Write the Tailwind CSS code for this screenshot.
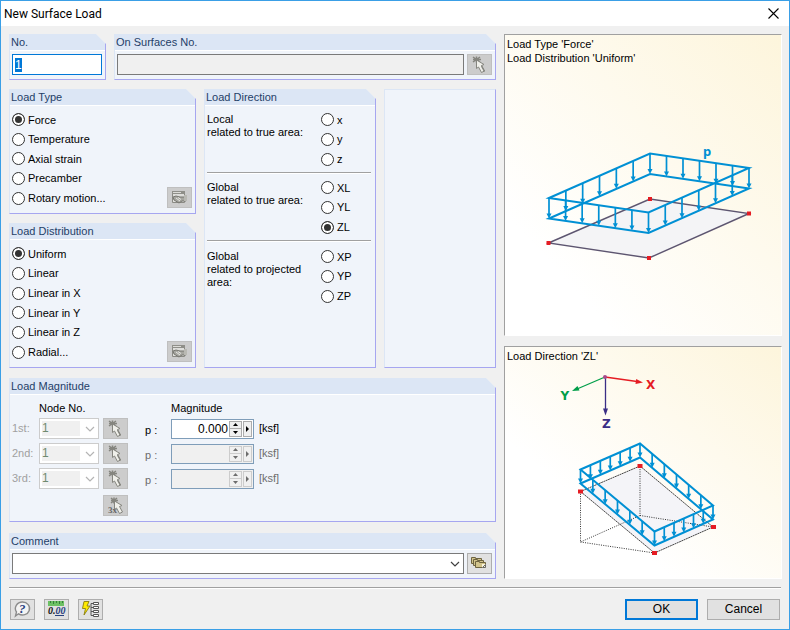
<!DOCTYPE html>
<html lang="en">
<head>
  <meta charset="UTF-8" />
  <meta name="viewport" content="width=device-width, initial-scale=1.0" />
  <title>New Surface Load</title>

  <!-- Tailwind CSS -->
  <script src="https://cdn.jsdelivr.net/npm/@tailwindcss/browser@4"></script>
</head>
<body class="bg-[#f0f0f0] text-black font-['Liberation_Sans',Arial,sans-serif] text-[11px]">

<!-- Shared icons -->
<svg class="hidden">
  <symbol id="icon-pick" viewBox="0 0 23 19">
    <path d="M5 2l7 5M12 2l-7 5M8.500 1.500v6M5 4.500h8" stroke="#85857f" stroke-width="1.500" fill="none" />
    <path d="M8.500 5v8.500l2-1.500 3 5.500 3-1.500-3-5.500 2.500-1z" fill="#efefea" stroke="#85857f" stroke-width="1" />
    <path d="M14 10.500l3 5.500-1 1-3-5.500z" fill="#85857f" />
  </symbol>
  <symbol id="icon-edit" viewBox="0 0 23 19">
    <path d="M4.500 3.500h12v11h-12z" fill="#dededb" stroke="#8a8a84" />
    <path d="M4 3h13v3H4z" fill="#8f8f89" />
    <path d="M5 4.500h8" stroke="#dcdcd8" />
    <path d="M5 9l3-1 4 1h6v4h-4l-3 2-5-3z" fill="#a6a6a0" stroke="#777771" />
    <path d="M8 10l4 3M10 9.500l3 2" stroke="#e6e6e2" />
    <path d="M16 7h3v6h-3z" fill="#b9b9b3" />
  </symbol>
  <symbol id="chevron" viewBox="0 0 10 6">
    <path d="M1 1l4 4 4-4" fill="none" stroke="currentColor" stroke-width="1.200" />
  </symbol>
</svg>

<div class="min-h-screen flex flex-col border border-[#3a9fe6]">

  <!-- Title bar -->
  <header class="h-[25px] shrink-0 bg-white flex justify-between items-center pl-[3px] pr-[10px]">
    <h1 class="text-[12px] font-[Roboto,sans-serif]">New Surface Load</h1>
    <button aria-label="Close">
      <svg class="w-[11px] h-[11px]" viewBox="0 0 11 11"><path d="M.5.5l10 10M10.500.5l-10 10" stroke="#000" stroke-width="1.100" /></svg>
    </button>
  </header>

  <main class="grow grid grid-cols-[487fr_278fr] gap-2 pt-2 pl-2 pr-[7px]">

    <!-- Form -->
    <div class="flex flex-col gap-[9px]">

      <div class="grid grid-cols-[97fr_382fr] gap-2">
        <section class="bg-[#f0f4fa] border-l border-l-[#dce6f5] border-r border-b border-r-[#a6a6f0] border-b-[#a6a6f0] [clip-path:polygon(0_0,calc(100%-10px)_0,100%_10px,100%_100%,0_100%)]">
          <h2 class="h-[17px] leading-4 bg-[#dce6f5] border-b border-white pl-px text-[#1f4068]"><label for="no">No.</label></h2>
          <div class="pt-[3px] pb-[4px] pl-[2px] pr-[3px]">
            <input id="no" type="text" value="1" class="block w-full h-[21px] bg-white border border-[#0078d7] px-[2px] text-[12px] outline-none selection:bg-[#0078d7] selection:text-white" />
          </div>
        </section>
        <section class="bg-[#f0f4fa] border-l border-l-[#dce6f5] border-r border-b border-r-[#a6a6f0] border-b-[#a6a6f0] [clip-path:polygon(0_0,calc(100%-10px)_0,100%_10px,100%_100%,0_100%)]">
          <h2 class="h-[17px] leading-4 bg-[#dce6f5] border-b border-white pl-px text-[#1f4068]"><label for="surfaces">On Surfaces No.</label></h2>
          <div class="flex gap-[3px] pt-[3px] pb-[4px] pl-[2px] pr-[3px]">
            <input id="surfaces" type="text" disabled class="grow h-[21px] bg-[#f0f0f0] border border-[#7a7a7a] px-[2px]" />
            <button disabled aria-label="Pick surfaces" class="w-[25px] h-[21px] bg-[#cccccc] border border-[#bfbfbf]"><svg class="w-full h-full"><use href="#icon-pick" /></svg></button>
          </div>
        </section>
      </div>

      <div class="grid grid-cols-[187fr_172fr_112fr] gap-2">
        <div class="flex flex-col gap-[9px]">

          <!-- Load Type -->
          <section class="bg-[#f0f4fa] border-l border-l-[#dce6f5] border-r border-b border-r-[#a6a6f0] border-b-[#a6a6f0] [clip-path:polygon(0_0,calc(100%-10px)_0,100%_10px,100%_100%,0_100%)]">
            <h2 class="h-[17px] leading-4 bg-[#dce6f5] border-b border-white pl-px text-[#1f4068]">Load Type</h2>
            <div class="flex justify-between items-end pt-1 pb-[5px] pl-[2px] pr-[3px]">
              <div class="grid grid-rows-5 h-[98px]">
                <label class="flex items-center gap-[3px]"><input type="radio" name="type" checked class="appearance-none w-[13px] h-[13px] rounded-full border border-[#333] bg-white checked:bg-[#333] checked:shadow-[inset_0_0_0_2px_white]" />Force</label>
                <label class="flex items-center gap-[3px]"><input type="radio" name="type" class="appearance-none w-[13px] h-[13px] rounded-full border border-[#333] bg-white checked:bg-[#333] checked:shadow-[inset_0_0_0_2px_white]" />Temperature</label>
                <label class="flex items-center gap-[3px]"><input type="radio" name="type" class="appearance-none w-[13px] h-[13px] rounded-full border border-[#333] bg-white checked:bg-[#333] checked:shadow-[inset_0_0_0_2px_white]" />Axial strain</label>
                <label class="flex items-center gap-[3px]"><input type="radio" name="type" class="appearance-none w-[13px] h-[13px] rounded-full border border-[#333] bg-white checked:bg-[#333] checked:shadow-[inset_0_0_0_2px_white]" />Precamber</label>
                <label class="flex items-center gap-[3px]"><input type="radio" name="type" class="appearance-none w-[13px] h-[13px] rounded-full border border-[#333] bg-white checked:bg-[#333] checked:shadow-[inset_0_0_0_2px_white]" />Rotary motion...</label>
              </div>
              <button disabled aria-label="Edit load type" class="w-[25px] h-[21px] bg-[#cccccc] border border-[#bfbfbf]"><svg class="w-full h-full"><use href="#icon-edit" /></svg></button>
            </div>
          </section>

          <!-- Load Distribution -->
          <section class="bg-[#f0f4fa] border-l border-l-[#dce6f5] border-r border-b border-r-[#a6a6f0] border-b-[#a6a6f0] [clip-path:polygon(0_0,calc(100%-10px)_0,100%_10px,100%_100%,0_100%)]">
            <h2 class="h-[17px] leading-4 bg-[#dce6f5] border-b border-white pl-px text-[#1f4068]">Load Distribution</h2>
            <div class="flex justify-between items-end pt-1 pb-[5px] pl-[2px] pr-[3px]">
              <div class="grid grid-rows-6 h-[118px]">
                <label class="flex items-center gap-[3px]"><input type="radio" name="dist" checked class="appearance-none w-[13px] h-[13px] rounded-full border border-[#333] bg-white checked:bg-[#333] checked:shadow-[inset_0_0_0_2px_white]" />Uniform</label>
                <label class="flex items-center gap-[3px]"><input type="radio" name="dist" class="appearance-none w-[13px] h-[13px] rounded-full border border-[#333] bg-white checked:bg-[#333] checked:shadow-[inset_0_0_0_2px_white]" />Linear</label>
                <label class="flex items-center gap-[3px]"><input type="radio" name="dist" class="appearance-none w-[13px] h-[13px] rounded-full border border-[#333] bg-white checked:bg-[#333] checked:shadow-[inset_0_0_0_2px_white]" />Linear in X</label>
                <label class="flex items-center gap-[3px]"><input type="radio" name="dist" class="appearance-none w-[13px] h-[13px] rounded-full border border-[#333] bg-white checked:bg-[#333] checked:shadow-[inset_0_0_0_2px_white]" />Linear in Y</label>
                <label class="flex items-center gap-[3px]"><input type="radio" name="dist" class="appearance-none w-[13px] h-[13px] rounded-full border border-[#333] bg-white checked:bg-[#333] checked:shadow-[inset_0_0_0_2px_white]" />Linear in Z</label>
                <label class="flex items-center gap-[3px]"><input type="radio" name="dist" class="appearance-none w-[13px] h-[13px] rounded-full border border-[#333] bg-white checked:bg-[#333] checked:shadow-[inset_0_0_0_2px_white]" />Radial...</label>
              </div>
              <button disabled aria-label="Edit load distribution" class="w-[25px] h-[21px] bg-[#cccccc] border border-[#bfbfbf]"><svg class="w-full h-full"><use href="#icon-edit" /></svg></button>
            </div>
          </section>
        </div>

        <!-- Load Direction -->
        <section class="bg-[#f0f4fa] border-l border-l-[#dce6f5] border-r border-b border-r-[#a6a6f0] border-b-[#a6a6f0] [clip-path:polygon(0_0,calc(100%-10px)_0,100%_10px,100%_100%,0_100%)]">
          <h2 class="h-[17px] leading-4 bg-[#dce6f5] border-b border-white pl-px text-[#1f4068]">Load Direction</h2>
          <div class="pl-[2px] pr-1">
            <div class="grid grid-cols-[114fr_50fr] pt-1 pb-[3px]">
              <p class="pt-[3px] leading-[13px]">Local<br />related to true area:</p>
              <div class="grid grid-rows-3 h-[59px]">
                <label class="flex items-center gap-[3px]"><input type="radio" name="dir" class="appearance-none w-[13px] h-[13px] rounded-full border border-[#333] bg-white checked:bg-[#333] checked:shadow-[inset_0_0_0_2px_white]" />x</label>
                <label class="flex items-center gap-[3px]"><input type="radio" name="dir" class="appearance-none w-[13px] h-[13px] rounded-full border border-[#333] bg-white checked:bg-[#333] checked:shadow-[inset_0_0_0_2px_white]" />y</label>
                <label class="flex items-center gap-[3px]"><input type="radio" name="dir" class="appearance-none w-[13px] h-[13px] rounded-full border border-[#333] bg-white checked:bg-[#333] checked:shadow-[inset_0_0_0_2px_white]" />z</label>
              </div>
            </div>
            <hr class="h-[2px] bg-white border-t border-[#a0a0a0]" />
            <div class="grid grid-cols-[114fr_50fr] pt-1 pb-[3px]">
              <p class="pt-[3px] leading-[13px]">Global<br />related to true area:</p>
              <div class="grid grid-rows-3 h-[59px]">
                <label class="flex items-center gap-[3px]"><input type="radio" name="dir" class="appearance-none w-[13px] h-[13px] rounded-full border border-[#333] bg-white checked:bg-[#333] checked:shadow-[inset_0_0_0_2px_white]" />XL</label>
                <label class="flex items-center gap-[3px]"><input type="radio" name="dir" class="appearance-none w-[13px] h-[13px] rounded-full border border-[#333] bg-white checked:bg-[#333] checked:shadow-[inset_0_0_0_2px_white]" />YL</label>
                <label class="flex items-center gap-[3px]"><input type="radio" name="dir" checked class="appearance-none w-[13px] h-[13px] rounded-full border border-[#333] bg-white checked:bg-[#333] checked:shadow-[inset_0_0_0_2px_white]" />ZL</label>
              </div>
            </div>
            <hr class="h-[2px] bg-white border-t border-[#a0a0a0]" />
            <div class="grid grid-cols-[114fr_50fr] pt-[5px]">
              <p class="pt-[3px] leading-[13px]">Global<br />related to projected<br />area:</p>
              <div class="grid grid-rows-3 h-[59px]">
                <label class="flex items-center gap-[3px]"><input type="radio" name="dir" class="appearance-none w-[13px] h-[13px] rounded-full border border-[#333] bg-white checked:bg-[#333] checked:shadow-[inset_0_0_0_2px_white]" />XP</label>
                <label class="flex items-center gap-[3px]"><input type="radio" name="dir" class="appearance-none w-[13px] h-[13px] rounded-full border border-[#333] bg-white checked:bg-[#333] checked:shadow-[inset_0_0_0_2px_white]" />YP</label>
                <label class="flex items-center gap-[3px]"><input type="radio" name="dir" class="appearance-none w-[13px] h-[13px] rounded-full border border-[#333] bg-white checked:bg-[#333] checked:shadow-[inset_0_0_0_2px_white]" />ZP</label>
              </div>
            </div>
          </div>
        </section>

        <div class="bg-[#f0f4fa] border border-t-[#dce6f5] border-l-[#dce6f5] border-r-[#a6a6f0] border-b-[#a6a6f0]"></div>
      </div>

      <!-- Load Magnitude -->
      <section class="bg-[#f0f4fa] border-l border-l-[#dce6f5] border-r border-b border-r-[#a6a6f0] border-b-[#a6a6f0] mt-px [clip-path:polygon(0_0,calc(100%-10px)_0,100%_10px,100%_100%,0_100%)]">
        <h2 class="h-[17px] leading-4 bg-[#dce6f5] border-b border-white pl-px text-[#1f4068]">Load Magnitude</h2>
        <div class="grid grid-cols-[23px_60px_25px_35px_83px_auto] justify-start items-center gap-1 pt-[5px] pb-[5px] pl-[2px]">
          <span class="col-start-2 col-span-3 h-[14px]">Node No.</span>
          <span class="h-[14px]">Magnitude</span>

          <label for="node1" class="col-start-1 text-[#a0a0a0]">1st:</label>
          <div class="h-[21px] flex items-center bg-white border border-[#cccccc] p-[2px] text-[#b4b4b4]">
            <select id="node1" disabled class="appearance-none w-[38px] h-[15px] bg-[#f0f0f0] text-[12px] leading-[13px] text-[#6f8a6f] opacity-100"><option>1</option></select>
            <svg class="w-[10px] h-[6px] ml-[5px]"><use href="#chevron" /></svg>
          </div>
          <button disabled aria-label="Pick 1st node" class="w-[25px] h-[21px] bg-[#cccccc] border border-[#bfbfbf]"><svg class="w-full h-full"><use href="#icon-pick" /></svg></button>
          <label for="p1" class="pl-[13px] pt-1">p :</label>
          <div class="h-[20px] flex gap-px bg-white border border-[#7f9db9] p-px">
            <input id="p1" type="text" value="0.000" class="min-w-0 grow text-right text-[12px] outline-none" />
            <div class="shrink-0 w-[13px] flex flex-col border border-[#acacac] bg-[#f0f0f0]">
              <button aria-label="Increase" class="grow flex items-center justify-center border-b border-[#acacac]"><svg class="w-[5px] h-[3px]" viewBox="0 0 5 3"><path d="M0 3L2.500 0 5 3z" /></svg></button>
              <button aria-label="Decrease" class="grow flex items-center justify-center"><svg class="w-[5px] h-[3px]" viewBox="0 0 5 3"><path d="M0 0L2.500 3 5 0z" /></svg></button>
            </div>
            <button aria-label="More" class="shrink-0 w-[9px] flex items-center justify-center border border-[#acacac] bg-[#f0f0f0]"><svg class="w-[3px] h-[6px]" viewBox="0 0 3 6"><path d="M0 0l3 3-3 3z" /></svg></button>
          </div>
          <span class="pl-px">[ksf]</span>

          <label for="node2" class="text-[#a0a0a0]">2nd:</label>
          <div class="h-[21px] flex items-center bg-white border border-[#cccccc] p-[2px] text-[#b4b4b4]">
            <select id="node2" disabled class="appearance-none w-[38px] h-[15px] bg-[#f0f0f0] text-[12px] leading-[13px] text-[#6f8a6f] opacity-100"><option>1</option></select>
            <svg class="w-[10px] h-[6px] ml-[5px]"><use href="#chevron" /></svg>
          </div>
          <button disabled aria-label="Pick 2nd node" class="w-[25px] h-[21px] bg-[#cccccc] border border-[#bfbfbf]"><svg class="w-full h-full"><use href="#icon-pick" /></svg></button>
          <label for="p2" class="pl-[13px] pt-1 text-[#6d6d6d]">p :</label>
          <div class="h-[20px] flex gap-px bg-[#f0f0f0] border border-[#7f9db9] p-px">
            <input id="p2" type="text" disabled class="min-w-0 grow text-right text-[12px]" />
            <div class="shrink-0 w-[13px] flex flex-col border border-[#cccccc]">
              <button disabled aria-label="Increase" class="grow flex items-center justify-center border-b border-[#cccccc]"><svg class="w-[5px] h-[3px]" viewBox="0 0 5 3"><path d="M0 3L2.500 0 5 3z" fill="#6d6d6d" /></svg></button>
              <button disabled aria-label="Decrease" class="grow flex items-center justify-center"><svg class="w-[5px] h-[3px]" viewBox="0 0 5 3"><path d="M0 0L2.500 3 5 0z" fill="#6d6d6d" /></svg></button>
            </div>
            <button disabled aria-label="More" class="shrink-0 w-[9px] flex items-center justify-center border border-[#cccccc]"><svg class="w-[3px] h-[6px]" viewBox="0 0 3 6"><path d="M0 0l3 3-3 3z" fill="#6d6d6d" /></svg></button>
          </div>
          <span class="pl-px text-[#6d6d6d]">[ksf]</span>

          <label for="node3" class="text-[#a0a0a0]">3rd:</label>
          <div class="h-[21px] flex items-center bg-white border border-[#cccccc] p-[2px] text-[#b4b4b4]">
            <select id="node3" disabled class="appearance-none w-[38px] h-[15px] bg-[#f0f0f0] text-[12px] leading-[13px] text-[#6f8a6f] opacity-100"><option>1</option></select>
            <svg class="w-[10px] h-[6px] ml-[5px]"><use href="#chevron" /></svg>
          </div>
          <button disabled aria-label="Pick 3rd node" class="w-[25px] h-[21px] bg-[#cccccc] border border-[#bfbfbf]"><svg class="w-full h-full"><use href="#icon-pick" /></svg></button>
          <label for="p3" class="pl-[13px] pt-1 text-[#6d6d6d]">p :</label>
          <div class="h-[20px] flex gap-px bg-[#f0f0f0] border border-[#7f9db9] p-px">
            <input id="p3" type="text" disabled class="min-w-0 grow text-right text-[12px]" />
            <div class="shrink-0 w-[13px] flex flex-col border border-[#cccccc]">
              <button disabled aria-label="Increase" class="grow flex items-center justify-center border-b border-[#cccccc]"><svg class="w-[5px] h-[3px]" viewBox="0 0 5 3"><path d="M0 3L2.500 0 5 3z" fill="#6d6d6d" /></svg></button>
              <button disabled aria-label="Decrease" class="grow flex items-center justify-center"><svg class="w-[5px] h-[3px]" viewBox="0 0 5 3"><path d="M0 0L2.500 3 5 0z" fill="#6d6d6d" /></svg></button>
            </div>
            <button disabled aria-label="More" class="shrink-0 w-[9px] flex items-center justify-center border border-[#cccccc]"><svg class="w-[3px] h-[6px]" viewBox="0 0 3 6"><path d="M0 0l3 3-3 3z" fill="#6d6d6d" /></svg></button>
          </div>
          <span class="pl-px text-[#6d6d6d]">[ksf]</span>

          <button disabled aria-label="Pick three nodes" class="col-start-3 mt-[2px] w-[25px] h-[21px] bg-[#cccccc] border border-[#bfbfbf]">
            <svg class="w-full h-full" viewBox="0 0 23 19">
              <path d="M7 2l6 5M13 2l-6 5M10 1.500v6M7 4.500h7" stroke="#85857f" stroke-width="1.500" />
              <path d="M10.500 5v8.500l2-1.500 3 5.500 3-1.500-3-5.500 2.500-1z" fill="#efefea" stroke="#85857f" />
              <text x="4" y="17" font-size="9" font-family="Liberation Serif, serif" font-weight="bold" fill="#666">3x</text>
            </svg>
          </button>
        </div>
      </section>

      <!-- Comment -->
      <section class="bg-[#f0f4fa] border-l border-l-[#dce6f5] border-r border-b border-r-[#a6a6f0] border-b-[#a6a6f0] mt-auto [clip-path:polygon(0_0,calc(100%-10px)_0,100%_10px,100%_100%,0_100%)]">
        <h2 class="h-[17px] leading-4 bg-[#dce6f5] border-b border-white pl-px text-[#1f4068]"><label for="comment">Comment</label></h2>
        <div class="flex gap-[3px] pt-[3px] pb-[4px] pl-[2px] pr-[3px]">
          <div class="grow h-[21px] flex items-center bg-white border border-[#7a7a7a] pr-[3px] text-[#404040]">
            <select id="comment" class="appearance-none grow h-full px-[2px]"><option></option></select>
            <svg class="w-[10px] h-[6px]"><use href="#chevron" /></svg>
          </div>
          <button aria-label="Comment library" class="w-[25px] h-[21px] bg-[#e1e1e1] border border-[#adadad]">
            <svg class="w-full h-full" viewBox="0 0 23 19">
              <g fill="#d2c48c" stroke="#6e6440">
                <path d="M3.500 9.500v-6h4v1h6v5z" />
                <path d="M5.500 11.500v-6h4v1h6v5z" />
                <path d="M7.500 13.500v-6h4v1h6v5z" />
              </g>
              <path d="M14 10h4v4h-4z" fill="#f7f3dd" />
              <path d="M14.500 13.500l3-3M17.500 10.500v3h-3" stroke="#444" stroke-width=".8" fill="none" />
            </svg>
          </button>
        </div>
      </section>
    </div>

    <!-- Previews -->
    <div class="flex flex-col gap-[10px]">
      <section class="flex flex-col border border-t-[#a0a0a0] border-l-[#a0a0a0] border-r-white border-b-white bg-linear-to-tr from-white from-20% to-[#fdf5dc]">
        <p class="pt-[2px] pl-[2px] leading-[14px]">Load Type 'Force'<br />Load Distribution 'Uniform'</p>
        <svg class="w-full" viewBox="505 65 276 270">
          <path d="M548.500 243L650 199l99 14.500L649 258z" fill="#f4f4f6" stroke="#5d5570" stroke-width="1.400" />
          <g fill="#e51c23">
            <rect x="546.500" y="241" width="4" height="4" />
            <rect x="648" y="197" width="4" height="4" />
            <rect x="747" y="211.500" width="4" height="4" />
            <rect x="647" y="256" width="4" height="4" />
          </g>
          <g id="force-arrows" fill="#0090d4" stroke="#0090d4" stroke-width="2"></g>
          <text x="703" y="156" font-family="Noto Sans, sans-serif" font-weight="bold" font-size="13" fill="#0090d4">p</text>
        </svg>
      </section>

      <section class="grow flex flex-col border border-t-[#a0a0a0] border-l-[#a0a0a0] border-r-white border-b-white bg-linear-to-tr from-white from-30% to-[#fdf5dc]">
        <p class="pt-[2px] pl-[2px] leading-[14px]">Load Direction 'ZL'</p>
        <svg class="w-full" viewBox="505 363 276 215">
          <!-- Axes -->
          <g stroke-width="1.300">
            <path d="M605 377l32 4.500" stroke="#e51c23" />
            <path d="M643 382.500l-7.500 1.500.7-5z" fill="#e51c23" />
            <path d="M605 377l-28 12" stroke="#009e49" />
            <path d="M572 391l5.500-5 2 4.500z" fill="#009e49" />
            <path d="M605.500 377v33" stroke="#3b2e86" />
            <path d="M605.500 415.500l-2.500-7h5z" fill="#3b2e86" />
          </g>
          <circle cx="605" cy="377" r="2" fill="#a84a8c" />
          <g font-family="DejaVu Sans, sans-serif" font-weight="bold" font-size="12">
            <text x="646" y="389" fill="#e51c23">X</text>
            <text x="560.500" y="400" fill="#009e49">Y</text>
            <text x="602" y="428" fill="#3b2e86">Z</text>
          </g>
          <!-- Inclined surface -->
          <path d="M580.500 491.500L640 466l73 61-58.500 26z" fill="#f4f4f8" stroke="#333" stroke-dasharray="2 .5" stroke-width=".9" />
          <path d="M580.500 491.500V542L640 515.500V466M580.500 542l74 11M640 515.500l73 11.500" fill="none" stroke="#333" stroke-dasharray="1 1.300" />
          <g fill="#e51c23">
            <rect x="578" y="489.500" width="5" height="4" />
            <rect x="637.500" y="464" width="5" height="4" />
            <rect x="711" y="525" width="5" height="4" />
            <rect x="652" y="551" width="5" height="4" />
          </g>
          <g id="direction-arrows" fill="#0090d4" stroke="#0090d4" stroke-width="2"></g>
        </svg>
      </section>
    </div>
  </main>

  <!-- Buttons -->
  <footer class="pt-2 pb-[9px] pl-2 pr-[8px]">
    <hr class="h-[2px] bg-white border-t border-[#a0a0a0]" />
    <div class="flex gap-[9px] pt-[10px] pl-px pr-px">
      <button aria-label="Help" class="w-[25px] h-[21px] bg-[#e1e1e1] border border-[#adadad]">
        <svg class="w-full h-full" viewBox="0 0 23 19">
          <path d="M11.500 2a7 6.500 0 1 1-4 11.800L4.500 16l1-4A7 6.500 0 0 1 11.500 2z" fill="#f4f4f4" stroke="#8c8c8c" stroke-width="1.400" />
          <text x="8" y="13" font-size="13" font-weight="bold" font-style="italic" font-family="Liberation Serif, serif" fill="#27407e">?</text>
        </svg>
      </button>
      <button aria-label="Units and decimal places" class="w-[25px] h-[21px] bg-[#e1e1e1] border border-[#adadad]">
        <svg class="w-full h-full" viewBox="0 0 23 19">
          <path d="M3 1h16v5H3z" fill="#6cc064" />
          <path d="M5.500 1v2M8.500 1v3M11.500 1v2M14.500 1v3M17.500 1v2" stroke="#35803a" />
          <text x="3" y="14" font-size="10" font-weight="bold" font-style="italic" font-family="Liberation Serif, serif" fill="#111">0.<tspan fill="#27407e">00</tspan></text>
          <path d="M10 15.500h9" stroke="#27407e" />
        </svg>
      </button>
      <button aria-label="Load parameters" class="w-[25px] h-[21px] bg-[#e1e1e1] border border-[#adadad]">
        <svg class="w-full h-full" viewBox="0 0 23 19">
          <path d="M5 1.500h5L8 6h3l-6 9 1.500-6.500h-3z" fill="#ffea00" stroke="#8a7f10" stroke-width=".9" />
          <path d="M14 3.500h-2v12h2M12 7.500h2M12 11.500h2" fill="none" stroke="#555" />
          <path d="M14.500 2.500h5v2h-5zM14.500 6.500h5v2h-5zM14.500 10.500h5v2h-5zM14.500 14.500h5v2h-5z" fill="#fff" stroke="#555" />
        </svg>
      </button>
      <button class="ml-auto w-[73px] h-[21px] bg-[#e1e1e1] border-2 border-[#0078d7] text-[12px] leading-[17px]">OK</button>
      <button class="w-[73px] h-[21px] bg-[#e1e1e1] border border-[#adadad] text-[12px] leading-[19px]">Cancel</button>
    </div>
  </footer>
</div>

<script>
  // Draws a load block: two outlines and evenly spaced arrows along each side
  function drawLoad(id, corners, height, n) {
    const low = corners.map(([x, y]) => [x, y + height]);
    let out = `<path fill="none" d="M${corners.join("L")}zM${low.join("L")}z" />`;
    corners.forEach(([x1, y1], i) => {
      const [x2, y2] = corners[(i + 1) % corners.length];
      for (let k = 0; k < n; k++) {
        const x = x1 + (x2 - x1) * k / n;
        const y = y1 + (y2 - y1) * k / n;
        out += `<path stroke-width="1.700" d="M${x} ${y}v${height - 4}" /><path stroke="none" d="M${x} ${y + height}l-2.500 -5h5z" />`;
      }
    });
    document.getElementById(id).innerHTML = out;
  }

  drawLoad("force-arrows", [[549, 198], [650, 153.5], [749, 168], [648.5, 212.5]], 20.5, 6);
  drawLoad("direction-arrows", [[580.5, 469.5], [640, 443.5], [713, 505.5], [654.5, 531.5]], 14, 6);

  document.getElementById("no").select();
</script>
</body>
</html>
